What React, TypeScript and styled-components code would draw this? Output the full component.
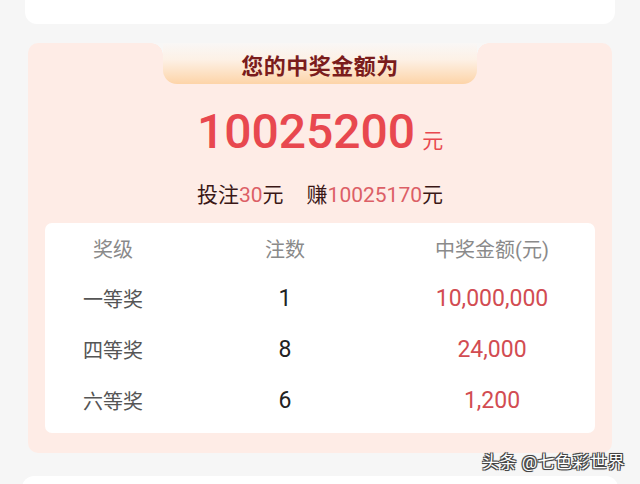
import React from "react";
import styled, { createGlobalStyle } from "styled-components";

const GlobalStyle = createGlobalStyle`
  html, body {
    margin: 0;
    padding: 0;
    background: #f6f6f6;
  }
  body {
    font-family: Roboto, "Noto Sans CJK SC", sans-serif;
    width: 640px;
    height: 484px;
    overflow: hidden;
  }
`;

const Page = styled.div`
  position: relative;
  display: flex;
  flex-direction: column;
  align-items: center;
  height: 484px;
  overflow: hidden;

  & > * {
    flex-shrink: 0;
  }
`;

const TopCard = styled.div`
  width: 590px;
  height: 24px;
  background: #ffffff;
  border-radius: 0 0 12px 12px;
`;

const PrizeCard = styled.div`
  margin-top: 19px;
  width: 584px;
  height: 410px;
  box-sizing: border-box;
  background: #feece6;
  border-radius: 10px;
  display: flex;
  flex-direction: column;
  align-items: center;
  padding: 0 17px 20px;
`;

const Tab = styled.div`
  position: relative;
  width: 314px;
  height: 49px;
  display: flex;
  align-items: center;
  justify-content: center;
  background: linear-gradient(180deg, #f9f7f6 0%, #fdf1e6 40%, #fdd4a8 100%);
  border-radius: 0 0 14px 14px;
  font-size: 22px;
  font-weight: 700;
  color: #7a1c1c;
  letter-spacing: 0.5px;

  &::before,
  &::after {
    content: "";
    position: absolute;
    top: 0;
    width: 12px;
    height: 12px;
  }
  &::before {
    left: -12px;
    background: radial-gradient(circle at 0 100%, transparent 11.5px, #f8f7f6 12px);
  }
  &::after {
    right: -12px;
    background: radial-gradient(circle at 100% 100%, transparent 11.5px, #f8f7f6 12px);
  }
`;

const Amount = styled.div`
  margin-top: 20px;
  display: flex;
  align-items: baseline;
  color: #e8484f;
  line-height: 56px;
`;

const AmountNumber = styled.span`
  font-size: 48px;
  font-weight: 500;
`;

const AmountUnit = styled.span`
  margin-left: 7px;
  font-size: 21px;
`;

const Summary = styled.div`
  margin-top: 12px;
  display: flex;
  gap: 23px;
  font-size: 21px;
  line-height: 28px;
  color: #3a1716;
`;

const Hl = styled.span`
  color: #dc5f66;
`;

const Table = styled.div`
  margin-top: 14px;
  width: 100%;
  background: #ffffff;
  border-radius: 7px;
  padding-bottom: 7px;
  box-sizing: border-box;
`;

const Row = styled.div<{ $head?: boolean }>`
  display: grid;
  grid-template-columns: 136px 208px 1fr;
  align-items: center;
  height: ${({ $head }) => ($head ? 50 : 51)}px;
  font-size: 20px;
  color: ${({ $head }) => ($head ? "#8a8a8a" : "#555555")};
  text-align: center;
`;

const Count = styled.span`
  font-size: 23px;
  color: #222222;
`;

const Money = styled.span`
  font-size: 23px;
  color: #d24c52;
`;

const NextCard = styled.div`
  margin-top: 23px;
  width: 596px;
  height: 40px;
  background: #ffffff;
  border-radius: 12px 12px 0 0;
`;

const Watermark = styled.div`
  position: absolute;
  right: 15px;
  bottom: 11px;
  font-size: 17px;
  color: #ffffff;
  letter-spacing: 0.5px;
  text-shadow: -1px -1px 0 #444, 1px -1px 0 #444, -1px 1px 0 #444, 1px 1px 0 #444, 0 0 2px #333;
`;

const rows = [
  { level: "一等奖", count: 1, money: "10,000,000" },
  { level: "四等奖", count: 8, money: "24,000" },
  { level: "六等奖", count: 6, money: "1,200" },
];

export default function App() {
  return (
    <Page>
      <GlobalStyle />
      <TopCard />
      <PrizeCard>
        <Tab>您的中奖金额为</Tab>
        <Amount>
          <AmountNumber>10025200</AmountNumber>
          <AmountUnit>元</AmountUnit>
        </Amount>
        <Summary>
          <span>
            投注<Hl>30</Hl>元
          </span>
          <span>
            赚<Hl>10025170</Hl>元
          </span>
        </Summary>
        <Table>
          <Row $head>
            <span>奖级</span>
            <span>注数</span>
            <span>中奖金额(元)</span>
          </Row>
          {rows.map((r) => (
            <Row key={r.level}>
              <span>{r.level}</span>
              <Count>{r.count}</Count>
              <Money>{r.money}</Money>
            </Row>
          ))}
        </Table>
      </PrizeCard>
      <NextCard />
      <Watermark>头条 @七色彩世界</Watermark>
    </Page>
  );
}
